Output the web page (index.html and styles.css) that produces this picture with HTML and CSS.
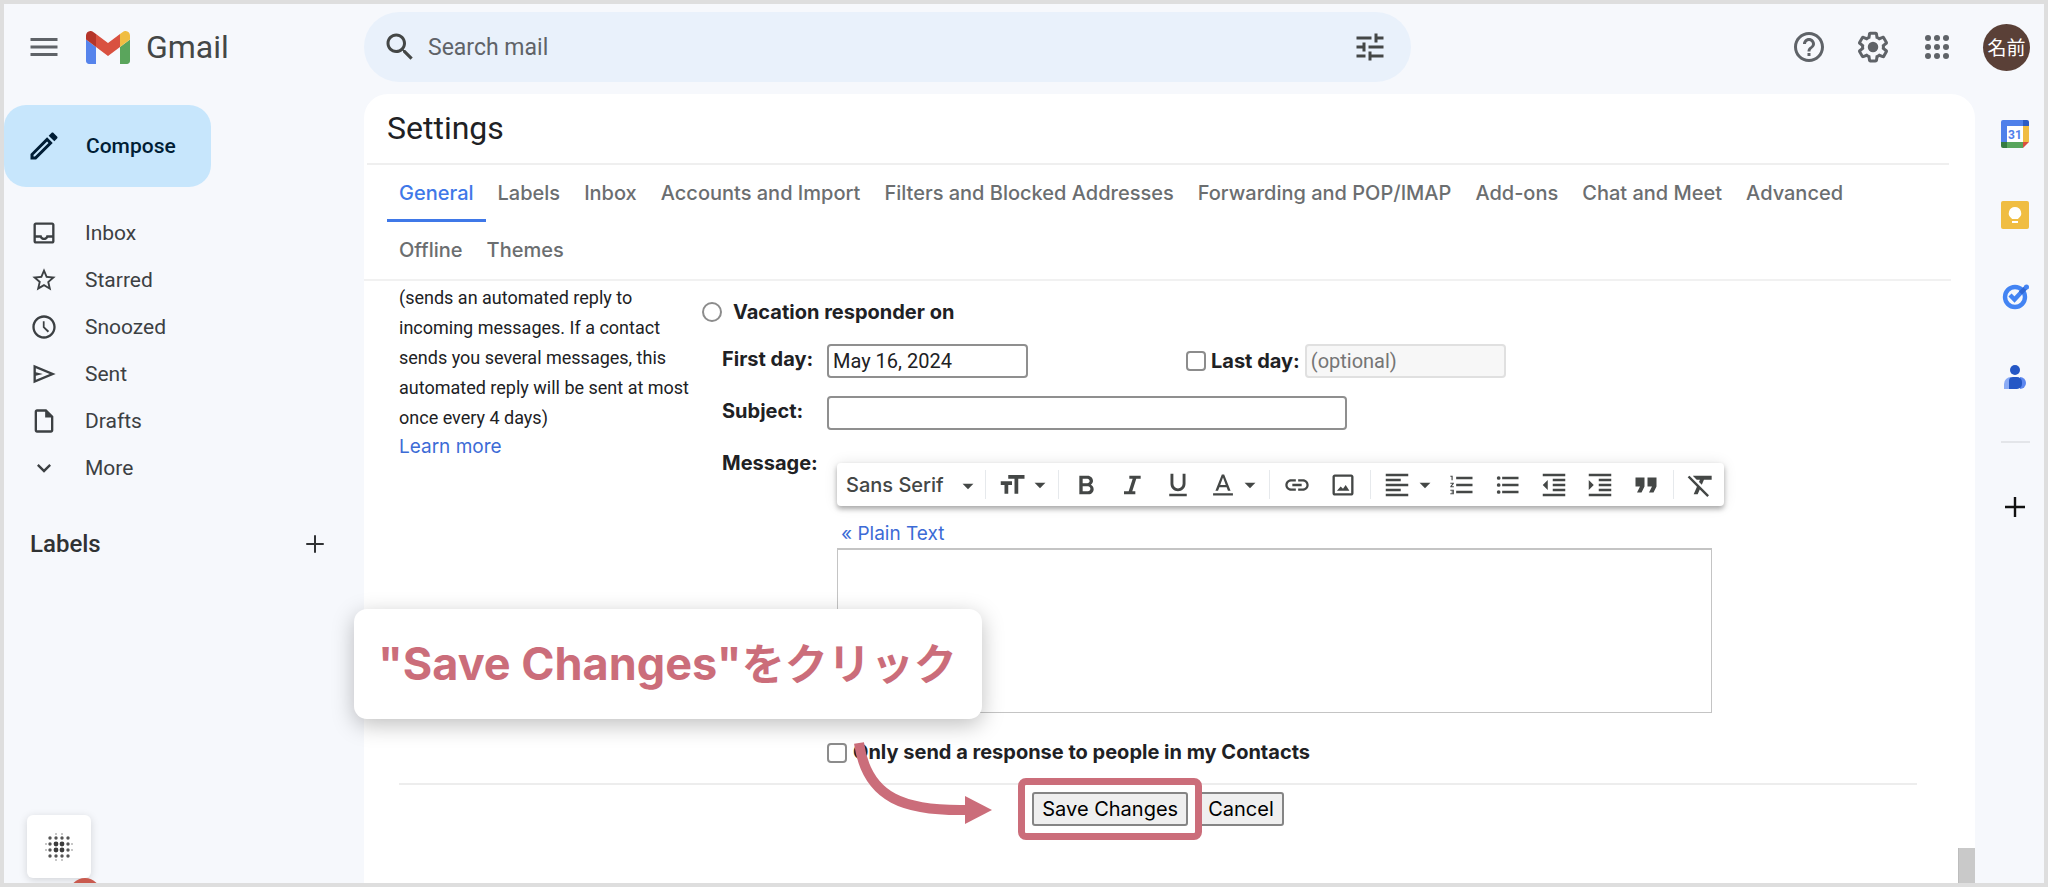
FILE: index.html
```html
<!doctype html>
<html lang="en">
<head>
    <meta charset="UTF-8">
    <title>Settings - Gmail</title>
    <link rel="stylesheet" href="styles.css">
</head>
<body>
<div class="app">

    <header class="header">
        <div class="brand">
            <button class="iconBtn" type="button" aria-label="Main menu">
                <svg class="ico36" viewBox="0 0 24 24"><path d="M3 18h18v-2H3v2zm0-5h18v-2H3v2zm0-7v2h18V6H3z"/></svg>
            </button>
            <a class="logo" href="#">
                <svg class="logoMark" viewBox="52 42 88 66">
                    <path fill="#5684ec" d="M58 108h14V74L52 59v43c0 3.32 2.69 6 6 6"/>
                    <path fill="#5aa55c" d="M120 108h14c3.32 0 6-2.69 6-6V59l-20 15"/>
                    <path fill="#f0bd42" d="M120 48v26l20-15v-8c0-7.42-8.47-11.65-14.4-7.2"/>
                    <path fill="#d95140" d="M72 74V48l24 18 24-18v26L96 92"/>
                    <path fill="#b5352a" d="M52 51v8l20 15V48l-5.6-4.2c-5.94-4.45-14.4-.22-14.4 7.2"/>
                </svg>
                <span>Gmail</span>
            </a>
        </div>

        <form class="search">
            <button class="iconBtn" type="button" aria-label="Search">
                <svg class="ico36" viewBox="0 0 24 24"><path d="M15.5 14h-.79l-.28-.27C15.41 12.59 16 11.11 16 9.5 16 5.91 13.09 3 9.5 3S3 5.91 3 9.5 5.91 16 9.5 16c1.61 0 3.09-.59 4.23-1.57l.27.28v.79l5 4.99L20.49 19l-4.99-5zm-6 0C7.01 14 5 11.99 5 9.5S7.01 5 9.5 5 14 7.01 14 9.5 11.99 14 9.5 14z"/></svg>
            </button>
            <input class="searchInput" type="text" placeholder="Search mail" aria-label="Search mail">
            <button class="iconBtn" type="button" aria-label="Show search options">
                <svg class="ico36" viewBox="0 0 24 24"><path d="M3 17v2h6v-2H3zM3 5v2h10V5H3zm10 16v-2h8v-2h-8v-2h-2v6h2zM7 9v2H3v2h4v2h2V9H7zm14 4v-2H11v2h10zm-6-4h2V7h4V5h-4V3h-2v6z"/></svg>
            </button>
        </form>

        <div class="headerTools">
            <button class="iconBtn" type="button" aria-label="Support">
                <svg class="ico36" viewBox="0 0 24 24"><path d="M11 18h2v-2h-2v2zm1-16C6.48 2 2 6.48 2 12s4.48 10 10 10 10-4.48 10-10S17.52 2 12 2zm0 18c-4.41 0-8-3.59-8-8s3.59-8 8-8 8 3.59 8 8-3.59 8-8 8zm0-14c-2.21 0-4 1.79-4 4h2c0-1.1.9-2 2-2s2 .9 2 2c0 2-3 1.75-3 5h2c0-2.25 3-2.5 3-5 0-2.21-1.79-4-4-4z"/></svg>
            </button>
            <button class="iconBtn" type="button" aria-label="Settings">
                <svg class="ico36" viewBox="0 0 24 24"><path d="M13.85 22.25h-3.7c-.74 0-1.36-.54-1.45-1.27l-.27-1.89c-.27-.14-.53-.29-.79-.46l-1.8.72c-.7.26-1.47-.03-1.81-.65L2.2 15.53c-.35-.66-.2-1.44.36-1.88l1.53-1.19c-.01-.15-.02-.3-.02-.46 0-.15.01-.31.02-.46l-1.52-1.19c-.59-.45-.74-1.26-.37-1.88l1.85-3.19c.34-.62 1.11-.9 1.79-.63l1.81.73c.26-.17.52-.32.78-.46l.27-1.91c.09-.7.71-1.25 1.44-1.25h3.7c.74 0 1.36.54 1.45 1.27l.27 1.89c.27.14.53.29.79.46l1.8-.72c.71-.26 1.48.03 1.82.65l1.84 3.18c.36.66.2 1.44-.36 1.88l-1.52 1.19c.01.15.02.3.02.46s-.01.31-.02.46l1.52 1.19c.56.45.72 1.23.37 1.86l-1.86 3.22c-.34.62-1.11.9-1.8.63l-1.8-.72c-.26.17-.52.32-.78.46l-.27 1.91c-.1.68-.72 1.22-1.46 1.22zm-3.23-2h2.76l.37-2.55.53-.22c.44-.18.88-.44 1.34-.78l.45-.34 2.38.96 1.38-2.4-2.03-1.58.07-.56c.03-.26.06-.51.06-.78s-.03-.53-.06-.78l-.07-.56 2.03-1.58-1.39-2.4-2.39.96-.45-.35c-.42-.32-.87-.58-1.33-.77l-.52-.22-.37-2.55h-2.76l-.37 2.55-.53.21c-.44.19-.88.44-1.34.79l-.45.33-2.38-.95-1.39 2.39 2.03 1.58-.07.56a7 7 0 0 0-.06.79c0 .26.02.53.06.78l.07.56-2.03 1.58 1.38 2.4 2.39-.96.45.35c.43.33.86.58 1.33.77l.53.22.38 2.55z"/><circle cx="12" cy="12" r="3.5"/></svg>
            </button>
            <button class="iconBtn" type="button" aria-label="Google apps">
                <svg class="ico36" viewBox="0 0 24 24"><circle cx="6" cy="6" r="2"/><circle cx="12" cy="6" r="2"/><circle cx="18" cy="6" r="2"/><circle cx="6" cy="12" r="2"/><circle cx="12" cy="12" r="2"/><circle cx="18" cy="12" r="2"/><circle cx="6" cy="18" r="2"/><circle cx="12" cy="18" r="2"/><circle cx="18" cy="18" r="2"/></svg>
            </button>
            <button class="avatar" type="button" lang="ja">名前</button>
        </div>
    </header>

    <div class="body">
        <nav class="sidebar">
            <button class="compose" type="button">
                <svg class="ico36" viewBox="0 0 24 24"><path d="M14.06 9.02l.92.92L5.92 19H5v-.92l9.06-9.06M17.66 3c-.25 0-.51.1-.7.29l-1.83 1.83 3.75 3.75 1.83-1.83c.39-.39.39-1.02 0-1.41l-2.34-2.34c-.2-.2-.45-.29-.71-.29zm-3.6 3.19L3 17.25V21h3.75L17.81 9.94l-3.75-3.75z"/></svg>
                <span>Compose</span>
            </button>

            <ul class="folders">
                <li><a href="#"><svg class="ico28" viewBox="0 0 24 24"><path d="M19 3H5c-1.1 0-2 .9-2 2v14c0 1.1.9 2 2 2h14c1.1 0 2-.9 2-2V5c0-1.1-.9-2-2-2zm0 16H5v-3h3.56c.69 1.19 1.97 2 3.45 2s2.75-.81 3.45-2H19v3zm0-5h-4.99c0 1.1-.9 2-2 2s-2-.9-2-2H5V5h14v9z"/></svg>Inbox</a></li>
                <li><a href="#"><svg class="ico28" viewBox="0 0 24 24"><path d="M22 9.24l-7.19-.62L12 2 9.19 8.63 2 9.24l5.46 4.73L5.82 21 12 17.27 18.18 21l-1.63-7.03L22 9.24zM12 15.4l-3.76 2.27 1-4.28-3.32-2.88 4.38-.38L12 6.1l1.71 4.04 4.38.38-3.32 2.88 1 4.28L12 15.4z"/></svg>Starred</a></li>
                <li><a href="#"><svg class="ico28" viewBox="0 0 24 24"><path d="M11.99 2C6.47 2 2 6.48 2 12s4.47 10 9.99 10C17.52 22 22 17.52 22 12S17.52 2 11.99 2zM12 20c-4.42 0-8-3.58-8-8s3.58-8 8-8 8 3.58 8 8-3.58 8-8 8zm.5-13H11v5.5l4.2 4.2 1.2-1.2-3.9-3.8z"/></svg>Snoozed</a></li>
                <li><a href="#"><svg class="ico28" viewBox="0 0 24 24"><path d="M3 20V4l19 8-19 8zm2-3l11.85-5L5 7v3.5l6 1.5-6 1.5V17z"/></svg>Sent</a></li>
                <li><a href="#"><svg class="ico28" viewBox="0 0 24 24"><path d="M14 2H6c-1.1 0-2 .9-2 2v16c0 1.1.9 2 2 2h12c1.1 0 2-.9 2-2V8l-6-6zM6 20V4h7v5h5v11H6z"/></svg>Drafts</a></li>
                <li><a href="#"><svg class="ico28" viewBox="0 0 24 24"><path d="M16.59 8.59L12 13.17 7.41 8.59 6 10l6 6 6-6z"/></svg>More</a></li>
            </ul>

            <div class="labelsHead">
                <h2>Labels</h2>
                <button class="iconBtn" type="button" aria-label="Create new label">
                    <svg class="ico30" viewBox="0 0 24 24"><path d="M19 12.8h-6.2V19h-1.6v-6.2H5v-1.6h6.2V5h1.6v6.2H19z"/></svg>
                </button>
            </div>

            <!-- extension widget in the corner -->
            <div class="widget">
                <svg class="widgetDots" viewBox="0 0 28 28">
                    <g fill="#3c3c3c">
                        <circle cx="11" cy="11" r="2.4"/><circle cx="17" cy="11" r="2.4"/><circle cx="11" cy="17" r="2.4"/><circle cx="17" cy="17" r="2.4"/>
                    </g>
                    <g fill="#555">
                        <circle cx="5" cy="5" r="1.7"/><circle cx="11" cy="5" r="1.7"/><circle cx="17" cy="5" r="1.7"/><circle cx="23" cy="5" r="1.7"/>
                        <circle cx="5" cy="11" r="1.7"/><circle cx="23" cy="11" r="1.7"/><circle cx="5" cy="17" r="1.7"/><circle cx="23" cy="17" r="1.7"/>
                        <circle cx="5" cy="23" r="1.7"/><circle cx="11" cy="23" r="1.7"/><circle cx="17" cy="23" r="1.7"/><circle cx="23" cy="23" r="1.7"/>
                    </g>
                    <g fill="#b5b5b5">
                        <circle cx="11" cy="1" r="1"/><circle cx="17" cy="1" r="1"/><circle cx="11" cy="27" r="1"/><circle cx="17" cy="27" r="1"/>
                        <circle cx="1" cy="11" r="1"/><circle cx="1" cy="17" r="1"/><circle cx="27" cy="11" r="1"/><circle cx="27" cy="17" r="1"/>
                    </g>
                </svg>
                <span class="widgetBadge"></span>
            </div>
        </nav>

        <main class="panel">
            <h1 class="panelTitle">Settings</h1>

            <ul class="tabs">
                <li><a class="tab active" href="#">General</a></li>
                <li><a class="tab" href="#">Labels</a></li>
                <li><a class="tab" href="#">Inbox</a></li>
                <li><a class="tab" href="#">Accounts and Import</a></li>
                <li><a class="tab" href="#">Filters and Blocked Addresses</a></li>
                <li><a class="tab" href="#">Forwarding and POP/IMAP</a></li>
                <li><a class="tab" href="#">Add-ons</a></li>
                <li><a class="tab" href="#">Chat and Meet</a></li>
                <li><a class="tab" href="#">Advanced</a></li>
                <li><a class="tab" href="#">Offline</a></li>
                <li><a class="tab" href="#">Themes</a></li>
            </ul>

            <form class="settings">
                <div class="setting">
                    <div class="help">
                        <p>(sends an automated reply to incoming messages. If a contact sends you several messages, this automated reply will be sent at most once every 4 days)</p>
                        <a class="link" href="#">Learn more</a>
                    </div>

                    <div class="responder">
                        <div class="radioRow">
                            <input class="radio" type="radio" name="vacation" id="vacationOn">
                            <label for="vacationOn">Vacation responder on</label>
                        </div>

                        <div class="fields">
                            <label for="firstDay">First day:</label>
                            <input class="text day" type="text" id="firstDay" value="May 16, 2024">
                            <div class="lastDay">
                                <input class="check" type="checkbox" id="useLastDay">
                                <label for="useLastDay">Last day:</label>
                                <input class="text day" type="text" placeholder="(optional)" aria-label="Last day" disabled>
                            </div>

                            <label for="subject">Subject:</label>
                            <input class="text subject" type="text" id="subject">

                            <label for="message">Message:</label>
                            <div class="message">
                                <div class="toolbar">
                                    <div class="fontPick">
                                        <select class="fontSelect" aria-label="Font">
                                            <option>Sans Serif</option>
                                        </select>
                                        <svg class="caret" viewBox="0 0 24 24"><path d="M7 10l5 5 5-5z"/></svg>
                                    </div>
                                    <span class="sep"></span>
                                    <button class="tool wide" type="button" aria-label="Size">
                                        <svg class="ico30" viewBox="0 0 24 24"><path d="M9 4v3h5v12h3V7h5V4H9zm-6 8h3v7h3v-7h3V9H3v3z"/></svg>
                                        <svg class="caret" viewBox="0 0 24 24"><path d="M7 10l5 5 5-5z"/></svg>
                                    </button>
                                    <span class="sep"></span>
                                    <button class="tool" type="button" aria-label="Bold">
                                        <svg class="ico32" viewBox="0 0 24 24"><path d="M15.6 11.79c.97-.67 1.65-1.77 1.65-2.79 0-2.26-1.75-4-4-4H7v14h7.04c2.09 0 3.71-1.7 3.71-3.79 0-1.52-.86-2.82-2.15-3.42zM9.5 7.3H13c.93 0 1.7.77 1.7 1.7s-.77 1.7-1.7 1.7H9.5V7.3zm4 9.4h-4V13h4c.93 0 1.8.87 1.8 1.85s-.87 1.85-1.8 1.85z"/></svg>
                                    </button>
                                    <button class="tool" type="button" aria-label="Italic">
                                        <svg class="ico32" viewBox="0 0 24 24"><path d="M10 5v2.3h2.5l-3 9.4H6V19h8.5v-2.3h-2.3l3-9.4h3.3V5z"/></svg>
                                    </button>
                                    <button class="tool" type="button" aria-label="Underline">
                                        <svg class="ico30" viewBox="0 0 24 24"><path d="M12 17c3.31 0 6-2.69 6-6V3h-2.3v8c0 2.1-1.6 3.7-3.7 3.7S8.3 13.1 8.3 11V3H6v8c0 3.31 2.69 6 6 6zm-7 2v2h14v-2H5z"/></svg>
                                    </button>
                                    <button class="tool wide" type="button" aria-label="Text color">
                                        <svg class="ico28" viewBox="0 0 24 24"><path d="M11 3L5.5 17h2.25l1.12-3h6.25l1.12 3h2.25L13 3h-2zm-1.38 9L12 5.67 14.38 12H9.62zM3.5 19h17v2h-17z"/></svg>
                                        <svg class="caret" viewBox="0 0 24 24"><path d="M7 10l5 5 5-5z"/></svg>
                                    </button>
                                    <span class="sep"></span>
                                    <button class="tool" type="button" aria-label="Link">
                                        <svg class="ico28" viewBox="0 0 24 24"><path d="M3.9 12c0-1.71 1.39-3.1 3.1-3.1h4V7H7c-2.76 0-5 2.24-5 5s2.24 5 5 5h4v-1.9H7c-1.71 0-3.1-1.39-3.1-3.1zM8 13h8v-2H8v2zm9-6h-4v1.9h4c1.71 0 3.1 1.39 3.1 3.1s-1.39 3.1-3.1 3.1h-4V17h4c2.76 0 5-2.24 5-5s-2.24-5-5-5z"/></svg>
                                    </button>
                                    <button class="tool" type="button" aria-label="Insert image">
                                        <svg class="ico28" viewBox="0 0 24 24"><path d="M19 5v14H5V5h14m0-2H5c-1.1 0-2 .9-2 2v14c0 1.1.9 2 2 2h14c1.1 0 2-.9 2-2V5c0-1.1-.9-2-2-2zM14.3 12L12 15.2l-2-2L6.8 17h10.7z"/></svg>
                                    </button>
                                    <span class="sep"></span>
                                    <button class="tool wide" type="button" aria-label="Align">
                                        <svg class="ico30" viewBox="0 0 24 24"><path d="M15 15H3v2h12v-2zm0-8H3v2h12V7zM3 13h18v-2H3v2zm0 8h18v-2H3v2zM3 3v2h18V3H3z"/></svg>
                                        <svg class="caret" viewBox="0 0 24 24"><path d="M7 10l5 5 5-5z"/></svg>
                                    </button>
                                    <button class="tool" type="button" aria-label="Numbered list">
                                        <svg class="ico28" viewBox="0 0 24 24"><path d="M2 17h2v.5H3v1h1v.5H2v1h3v-4H2v1zm1-9h1V4H2v1h1v3zm-1 3h1.8L2 13.1v.9h3v-1H3.2L5 10.9V10H2v1zm5-6v2h14V5H7zm0 14h14v-2H7v2zm0-6h14v-2H7v2z"/></svg>
                                    </button>
                                    <button class="tool" type="button" aria-label="Bulleted list">
                                        <svg class="ico28" viewBox="0 0 24 24"><circle cx="4" cy="6" r="1.6"/><circle cx="4" cy="12" r="1.6"/><circle cx="4" cy="18" r="1.6"/><path d="M7 19h14v-2H7v2zm0-6h14v-2H7v2zm0-8v2h14V5H7z"/></svg>
                                    </button>
                                    <button class="tool" type="button" aria-label="Indent less">
                                        <svg class="ico30" viewBox="0 0 24 24"><path d="M11 17h10v-2H11v2zm-8-5l4 4V8l-4 4zm0 9h18v-2H3v2zM3 3v2h18V3H3zm8 6h10V7H11v2zm0 4h10v-2H11v2z"/></svg>
                                    </button>
                                    <button class="tool" type="button" aria-label="Indent more">
                                        <svg class="ico30" viewBox="0 0 24 24"><path d="M3 21h18v-2H3v2zM3 8v8l4-4-4-4zm8 9h10v-2H11v2zM3 3v2h18V3H3zm8 6h10V7H11v2zm0 4h10v-2H11v2z"/></svg>
                                    </button>
                                    <button class="tool" type="button" aria-label="Quote">
                                        <svg class="ico36" viewBox="0 0 24 24"><path d="M6 17h3l2-4V7H5v6h3zm8 0h3l2-4V7h-6v6h3z"/></svg>
                                    </button>
                                    <span class="sep"></span>
                                    <button class="tool" type="button" aria-label="Remove formatting">
                                        <svg class="ico32" viewBox="0 0 24 24"><path d="M3.27 5L2 6.27l6.97 6.97L6.5 19h3l1.57-3.66L16.73 21 18 19.73 3.55 5.27 3.27 5zM6 5v.18L8.82 8h2.4l-.72 1.68 2.1 2.1L14.21 8H20V5H6z"/></svg>
                                    </button>
                                </div>
                                <a class="link plain" href="#">« Plain Text</a>
                                <textarea class="messageBox" id="message"></textarea>
                            </div>

                            <div class="contactsRow">
                                <input class="check" type="checkbox" id="onlyContacts">
                                <label for="onlyContacts">Only send a response to people in my Contacts</label>
                            </div>
                        </div>
                    </div>
                </div>

                <div class="actions">
                    <div class="saveWrap">
                        <button class="btn" type="button">Save Changes</button>
                        <svg class="arrow" viewBox="0 0 150 90">
                            <path d="M12 4C20 61 60 72 119 71" fill="none" stroke="#cb6d7a" stroke-width="10"/>
                            <path d="M118 57v28l27-14z" fill="#cb6d7a"/>
                        </svg>
                    </div>
                    <button class="btn" type="button">Cancel</button>
                </div>
            </form>

            <div class="callout" lang="ja">"Save Changes"<span class="calloutJa">をクリック</span></div>
            <div class="scrollThumb"></div>
        </main>

        <aside class="rail">
            <a href="#" aria-label="Calendar">
                <svg class="railIco" viewBox="0 0 28 28">
                    <path fill="#fff" d="M6 6h16v16H6z"/>
                    <path fill="#4f80ea" d="M2 0h20v6H6v16H0V2a2 2 0 0 1 2-2z"/>
                    <path fill="#2c5cc5" d="M22 0h4a2 2 0 0 1 2 2v4h-6z"/>
                    <path fill="#f0bd42" d="M22 6h6v16h-6z"/>
                    <path fill="#58a55c" d="M6 22h16v6H6z"/>
                    <path fill="#347b42" d="M0 22h6v6H2a2 2 0 0 1-2-2z"/>
                    <path fill="#d94f3d" d="M22 22h6l-6 6z"/>
                    <text class="calNum" x="14" y="19" text-anchor="middle">31</text>
                </svg>
            </a>
            <a href="#" aria-label="Keep">
                <svg class="railIco" viewBox="0 0 28 28">
                    <rect width="28" height="28" rx="2" fill="#f0bd42"/>
                    <path fill="#fff" d="M14 6a6.2 6.2 0 0 0-3.2 11.5v.5h6.4v-.5A6.2 6.2 0 0 0 14 6zM11 20h6v2h-6z"/>
                </svg>
            </a>
            <a href="#" aria-label="Tasks">
                <svg class="railIco" viewBox="0 0 28 28">
                    <circle cx="14" cy="15" r="10" fill="none" stroke="#4384f3" stroke-width="4.4"/>
                    <path d="M9 13l4.5 4.5L21 9.5" fill="none" stroke="#4384f3" stroke-width="4.4"/>
                    <path d="M19.5 11L26 4.5" stroke="#3068d5" stroke-width="4.4"/>
                    <circle cx="25.5" cy="5" r="2.5" fill="#4384f3"/>
                </svg>
            </a>
            <a href="#" aria-label="Contacts">
                <svg class="railIco" viewBox="0 0 28 28">
                    <circle cx="14" cy="7" r="5" fill="#2457c5"/>
                    <path fill="#8aabf5" d="M10 14a7 7 0 0 0-7 7v5h7z"/>
                    <path fill="#5c87ef" d="M19 14a6 6 0 0 1 0 12z"/>
                    <path fill="#2457c5" d="M12 14h4a5 5 0 0 1 5 5v2a5 5 0 0 1-5 5H8v-8a4 4 0 0 1 4-4z"/>
                </svg>
            </a>
            <span class="railLine"></span>
            <a class="railAdd" href="#" aria-label="Get add-ons">
                <svg class="ico32" viewBox="0 0 24 24"><path d="M19.5 12.9h-6.6v6.6h-1.8v-6.6H4.5v-1.8h6.6V4.5h1.8v6.6h6.6z"/></svg>
            </a>
        </aside>
    </div>
</div>
</body>
</html>
```

FILE: styles.css
```css
* {
    box-sizing: border-box;
}

body {
    margin: 0;
    font-family: Roboto, "Noto Sans CJK JP", sans-serif;
    font-size: 20px;
    color: #202124;
}

a {
    color: inherit;
    text-decoration: none;
}

ul {
    margin: 0;
    padding: 0;
    list-style: none;
}

button, input, select, textarea {
    font: inherit;
    color: inherit;
}

svg {
    display: block;
    flex: none;
    fill: currentColor;
}

.app {
    display: flex;
    flex-direction: column;
    height: 100vh;
    overflow: hidden;
    border: 4px solid #dedede;
    background: #f6f8fc;
}

/* icon sizes */
.ico28 { width: 28px; height: 28px; }
.ico30 { width: 30px; height: 30px; }
.ico32 { width: 32px; height: 32px; }
.ico36 { width: 36px; height: 36px; }

.iconBtn {
    padding: 0;
    border: 0;
    background: none;
}

/* wider face for tabs, labels, links and buttons */
.tabs, .link, .responder label, .fontSelect, .btn, .callout {
    font-family: Inter, "Noto Sans CJK JP", sans-serif;
}

/* header */
.header {
    display: flex;
    align-items: flex-start;
    flex: none;
    height: 90px;
    padding: 8px 14px 0 0;
    color: #5f6368;
}

.brand {
    display: flex;
    align-items: center;
    flex: none;
    gap: 24px;
    width: 360px;
    height: 70px;
    padding-left: 22px;
}

.logo {
    display: flex;
    align-items: center;
    gap: 16px;
    font-size: 32px;
    color: #444746;
}

.logoMark {
    width: 44px;
    height: 33px;
}

.search {
    display: flex;
    align-items: center;
    flex: 0 1 1047px;
    height: 70px;
    padding: 0 23px 0 18px;
    border-radius: 35px;
    background: #e9f1fb;
    color: #444746;
}

.searchInput {
    flex: 1;
    min-width: 0;
    margin-left: 8px;
    border: 0;
    padding: 0 2px;
    background: none;
    font-size: 23px;
    outline: none;
}

.searchInput::placeholder {
    color: #5f6368;
    opacity: 1;
}

.headerTools {
    display: flex;
    align-items: center;
    gap: 28px;
    height: 70px;
    margin-left: auto;
}

.avatar {
    width: 47px;
    height: 47px;
    padding: 0;
    border: 0;
    border-radius: 50%;
    background: #5a4037;
    color: #fff;
    font-family: "Noto Sans CJK JP", sans-serif;
    font-size: 19px;
    line-height: 44px;
}

.body {
    display: flex;
    flex: 1;
    min-height: 0;
}

/* sidebar */
.sidebar {
    position: relative;
    flex: none;
    width: 360px;
    padding-top: 11px;
}

.compose {
    display: flex;
    align-items: center;
    gap: 24px;
    width: 207px;
    height: 82px;
    padding: 0 0 0 22px;
    border: 0;
    border-radius: 22px;
    background: #c7e6fc;
    color: #001d35;
    font-size: 21px;
    font-weight: 500;
}

.folders {
    margin-top: 22px;
    font-size: 21px;
    color: #3c4043;
}

.folders a {
    display: flex;
    align-items: center;
    gap: 27px;
    height: 47px;
    padding-left: 26px;
}

.labelsHead {
    display: flex;
    align-items: center;
    justify-content: space-between;
    margin-top: 38px;
    padding: 0 34px 0 26px;
    color: #303234;
}

.labelsHead h2 {
    margin: 0;
    font-size: 24px;
    font-weight: 500;
}

.widget {
    position: absolute;
    left: 23px;
    bottom: 5px;
    display: flex;
    align-items: center;
    justify-content: center;
    width: 64px;
    height: 63px;
    border-radius: 6px;
    background: #fff;
    box-shadow: 0 2px 8px rgba(0, 0, 0, .15);
}

.widgetDots {
    width: 28px;
    height: 28px;
}

.widgetBadge {
    position: absolute;
    top: 63px;
    left: 42px;
    width: 32px;
    height: 32px;
    border-radius: 50%;
    background: #c95a4e;
}

/* settings panel */
.panel {
    position: relative;
    flex: 1;
    min-width: 0;
    border-radius: 24px 24px 0 0;
    background: #fff;
}

.panelTitle {
    margin: 0 26px 0 3px;
    padding-left: 20px;
    border-bottom: 2px solid #efefef;
    font-size: 32px;
    font-weight: 400;
    line-height: 69px;
}

.tabs {
    display: flex;
    flex-wrap: wrap;
    margin-right: 24px;
    padding: 0 80px 0 23px;
    border-bottom: 2px solid #f1f1f1;
    font-weight: 500;
    color: #6b6e70;
}

.tab {
    display: block;
    height: 57px;
    padding: 0 12px;
    line-height: 56px;
}

.tab.active {
    border-bottom: 3px solid #3f78e8;
    color: #3f78e8;
}

.settings {
    padding: 2px 58px 0 35px;
}

.setting {
    display: flex;
    padding-bottom: 15px;
    border-bottom: 2px solid #ededed;
}

.help {
    flex: none;
    width: 299px;
}

.help p {
    margin: 0;
    font-size: 18px;
    line-height: 30px;
}

.link {
    color: #3c6bd6;
    font-size: 19px;
    line-height: 28px;
}

.responder {
    flex: 1;
    min-width: 0;
    padding-top: 14px;
    font-weight: 700;
}

.radioRow {
    display: flex;
    align-items: center;
    gap: 11px;
    height: 30px;
    padding-left: 4px;
}

.radio, .check {
    appearance: none;
    flex: none;
    width: 20px;
    height: 20px;
    margin: 0;
    border: 2px solid #8c8c8c;
    background: #fff;
}

.radio {
    border-radius: 50%;
}

.check {
    border-radius: 4px;
}

.fields {
    display: grid;
    grid-template-columns: 105px 359px 1fr;
    row-gap: 18px;
    margin-top: 17px;
    padding-left: 24px;
    line-height: 31px;
}

.text {
    height: 34px;
    padding: 0 4px;
    border: 2px solid #8f8f8f;
    border-radius: 4px;
    background: #fff;
    font-weight: 400;
}

.text:disabled {
    border-color: #e0e0e0;
    background: #f7f7f7;
}

.text::placeholder {
    color: #757575;
    opacity: 1;
}

.day {
    width: 201px;
}

.lastDay {
    display: flex;
    align-items: center;
    gap: 5px;
}

.subject {
    grid-column: 2 / 4;
    width: 520px;
}

.message {
    grid-column: 2 / 4;
    width: 897px;
    padding: 15px 0 0 10px;
}

.toolbar {
    display: flex;
    align-items: center;
    width: 887px;
    height: 43px;
    border-radius: 4px;
    background: #fff;
    box-shadow: 0 3px 5px rgba(0, 0, 0, .3), 0 0 14px rgba(0, 0, 0, .1);
    color: #444746;
    line-height: 24px;
}

.fontPick {
    position: relative;
    width: 147px;
}

.fontSelect {
    appearance: none;
    width: 100%;
    padding: 0 0 0 9px;
    border: 0;
    background: none;
    font-size: 20px;
    font-weight: 500;
}

.fontPick .caret {
    position: absolute;
    top: 0;
    right: 0;
    pointer-events: none;
}

.caret {
    width: 26px;
    height: 26px;
}

.sep {
    flex: none;
    width: 1px;
    height: 29px;
    margin: 0 4px;
    background: #e6e9ec;
}

.tool {
    display: flex;
    align-items: center;
    justify-content: center;
    flex: none;
    width: 46px;
    height: 42px;
    padding: 0;
    border: 0;
    background: none;
}

.tool.wide {
    width: 64px;
    padding-left: 6px;
}

.plain {
    display: block;
    margin: 14px 0 0 4px;
    font-weight: 400;
}

.messageBox {
    display: block;
    width: 875px;
    height: 165px;
    border: 1px solid #c4c4c4;
    border-top: 2px solid #c4c4c4;
    background: #fff;
    resize: none;
}

.contactsRow {
    grid-column: 2 / 4;
    display: flex;
    align-items: center;
    gap: 6px;
    margin-top: 6px;
}

/* buttons under the form */
.actions {
    display: flex;
    justify-content: center;
    gap: 10px;
    padding-top: 7px;
}

.btn {
    height: 34px;
    padding: 0 8px;
    border: 2px solid #858585;
    border-radius: 3px;
    background: #efefef;
    color: #000;
    line-height: 28px;
}

.saveWrap {
    position: relative;
}

/* highlight round the save button */
.saveWrap::after {
    content: "";
    position: absolute;
    inset: -14px;
    border: 7px solid #cb6d7a;
    border-radius: 8px;
    pointer-events: none;
}

.arrow {
    position: absolute;
    right: calc(100% + 35px);
    bottom: -3px;
    width: 150px;
    height: 90px;
}

.callout {
    position: absolute;
    top: 515px;
    left: -10px;
    height: 110px;
    padding: 0 25px 0 24px;
    border-radius: 13px;
    background: #fff;
    box-shadow: 0 6px 22px rgba(0, 0, 0, .25);
    color: #cb6d7a;
    font-size: 45px;
    font-weight: 700;
    line-height: 110px;
    white-space: nowrap;
}

.calloutJa {
    font-size: 43px;
}

.scrollThumb {
    position: absolute;
    right: 0;
    bottom: 0;
    width: 17px;
    height: 35px;
    border-left: 1px solid #bdbdbd;
    background: #c9c9c9;
}

/* right rail */
.rail {
    display: flex;
    flex-direction: column;
    align-items: center;
    gap: 53px;
    flex: none;
    width: 69px;
    padding: 26px 0 0 11px;
}

.railIco {
    width: 28px;
    height: 28px;
}

.calNum {
    font-size: 12px;
    font-weight: 700;
    fill: #4f80ea;
}

.railLine {
    width: 29px;
    height: 2px;
    margin-top: -3px;
    background: #e3e5e9;
}

.railAdd {
    margin-top: -5px;
    color: #111;
}
```
